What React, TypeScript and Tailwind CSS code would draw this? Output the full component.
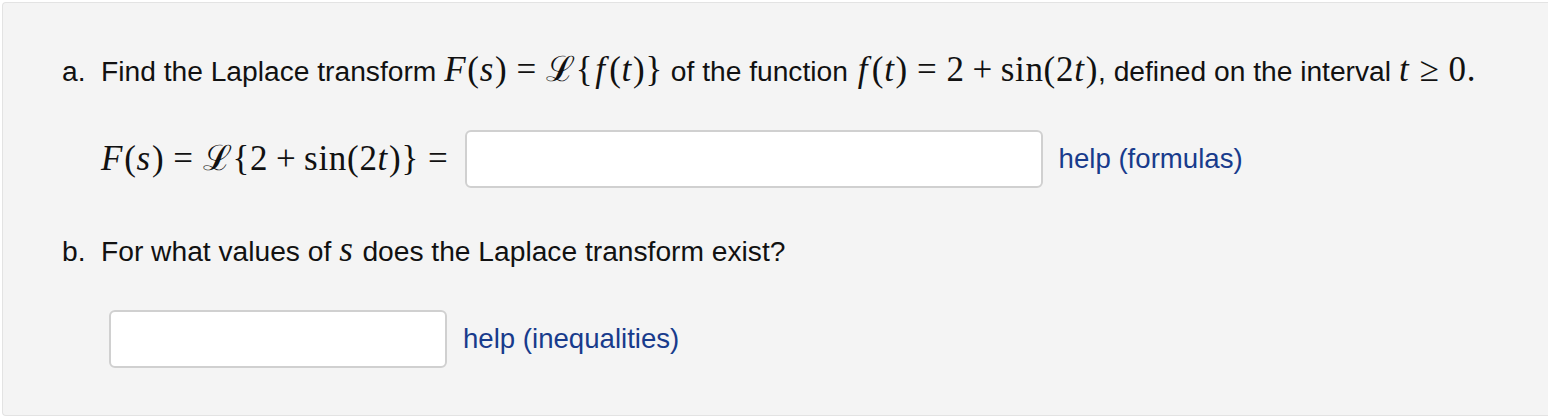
const serif = "font-['Liberation_Serif','DejaVu_Serif',serif]";

function V({ children, wide }: { children: React.ReactNode; wide?: boolean }) {
  return <span className={wide ? 'italic pl-[0.06em] pr-[0.1em]' : 'italic pr-[0.03em]'}>{children}</span>;
}

function Op({ children }: { children: React.ReactNode }) {
  return <span className="mx-[0.26em]">{children}</span>;
}

function Plus() {
  return <span className="mx-[0.22em]">+</span>;
}

function Math({ children }: { children: React.ReactNode }) {
  return <span className={`${serif} text-[35px] tracking-[0.02em] whitespace-nowrap`}>{children}</span>;
}

function Field({ width }: { width: string }) {
  return (
    <input
      type="text"
      className={`${width} h-[58px] rounded-[6px] border-2 border-[#d0d0d0] bg-white outline-none`}
    />
  );
}

function HelpLink({ children }: { children: React.ReactNode }) {
  return <a className="ml-[16px] text-[#183b8c] text-[27.6px] cursor-pointer">{children}</a>;
}

export default function App() {
  return (
    <div className="w-[1548px] h-[418px] bg-white pt-[2px] pl-[2px] overflow-hidden">
      <div className="w-[1560px] h-[414px] rounded-l-[4px] border border-r-0 border-[#e3e3e3] bg-[#f4f4f4] pt-[47px] pl-[59px] text-[28.2px] text-[#111] font-['Liberation_Sans',Arial,sans-serif]">
        <div className="flex items-baseline h-[40px] leading-[40px]">
          <span className="w-[39px] shrink-0">a.</span>
          <span className="whitespace-nowrap">
            Find the Laplace transform{' '}
            <Math>
              <V>F</V>(<V>s</V>)<Op>=</Op>ℒ{'{'}<V wide>f</V>(<V>t</V>){'}'}
            </Math>{' '}
            of the function{' '}
            <Math>
              <V wide>f</V>(<V>t</V>)<Op>=</Op>2<Plus />sin(2<V>t</V>)
            </Math>
            , defined on the interval{' '}
            <Math>
              <V>t</V>
              <Op>≥</Op>0.
            </Math>
          </span>
        </div>

        <div className="flex items-center mt-[40px] pl-[39px]">
          <Math>
            <V>F</V>(<V>s</V>)<Op>=</Op>ℒ{'{'}2<Plus />sin(2<V>t</V>){'}'}
            <Op>=</Op>
          </Math>
          <span className="ml-[7px]">
            <Field width="w-[578px]" />
          </span>
          <HelpLink>help (formulas)</HelpLink>
        </div>

        <div className="flex items-baseline h-[40px] leading-[40px] mt-[42px]">
          <span className="w-[39px] shrink-0">b.</span>
          <span className="whitespace-nowrap">
            For what values of{' '}
            <Math>
              <V>s</V>
            </Math>{' '}
            does the Laplace transform exist?
          </span>
        </div>

        <div className="flex items-center mt-[40px] pl-[47px]">
          <Field width="w-[338px]" />
          <HelpLink>help (inequalities)</HelpLink>
        </div>
      </div>
    </div>
  );
}
